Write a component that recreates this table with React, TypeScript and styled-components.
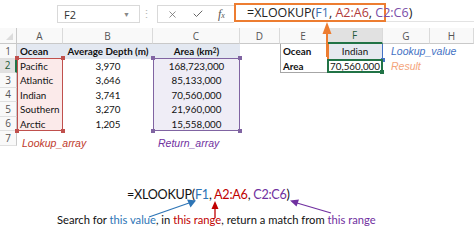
import styled, { createGlobalStyle } from "styled-components";
import { X, Check } from "lucide-react";

const GlobalStyle = createGlobalStyle`
  html, body { margin: 0; padding: 0; background: #fff; }
  body { font-family: Lato, "Liberation Sans", sans-serif; }
`;

const Page = styled.div`
  position: relative;
  width: 474px;
  height: 245px;
  overflow: hidden;
  background: #fff;
`;

/* ---------- formula bar ---------- */

const Toolbar = styled.div`
  display: flex;
  align-items: flex-start;
  height: 28px;
  padding: 3px 0 0 57px;
  box-sizing: border-box;
  font-family: "Open Sans", "Liberation Sans", sans-serif;
`;

const NameBox = styled.div`
  display: flex;
  align-items: center;
  justify-content: space-between;
  width: 83px;
  height: 18px;
  margin-top: 2px;
  padding: 0 9px 0 6px;
  box-sizing: border-box;
  border: 1px solid #d9d9d9;
  font-size: 11px;
  color: #333;

  span.caret {
    font-size: 7px;
    color: #888;
  }
`;

const Grip = styled.div`
  width: 17px;
  height: 18px;
  margin-top: 2px;
  padding-left: 1px;
  box-sizing: border-box;
  color: #b5b5b5;
  font-size: 11px;
  line-height: 18px;
`;

const FxBox = styled.div`
  display: flex;
  align-items: center;
  gap: 14px;
  width: 77px;
  height: 18px;
  margin-top: 2px;
  padding-left: 9px;
  box-sizing: border-box;
  border: 1px solid #d9d9d9;
  border-right: none;
  color: #666;

  i {
    font-family: "Liberation Serif", serif;
    font-size: 12px;
    color: #555;
  }
  i small {
    font-size: 8px;
  }
`;

const FormulaBox = styled.div`
  width: 152px;
  height: 19px;
  padding-left: 11px;
  box-sizing: border-box;
  border: 2px solid #ed7d31;
  font-size: 12.5px;
  line-height: 15px;
  color: #222;
  white-space: nowrap;
`;

const Ref = styled.span<{ $c: string }>`
  color: ${(p) => p.$c};
`;

const BarRest = styled.div`
  flex: 1;
  height: 18px;
  border-bottom: 1px solid #e3e3e3;
`;

/* ---------- sheet ---------- */

const Sheet = styled.div`
  display: grid;
  grid-template-columns: 17px 46px 90px 87px 40px 47px 56px 47px 44px;
  grid-template-rows: 16px repeat(7, 14.5px);
  color: #111;
`;

const ColHead = styled.div<{ $col: number; $active?: boolean }>`
  grid-column: ${(p) => p.$col};
  grid-row: 1;
  display: flex;
  align-items: center;
  justify-content: center;
  background: ${(p) => (p.$active ? "#e1e1e1" : "#f9f9f9")};
  border-right: 1px solid #dadada;
  border-bottom: ${(p) => (p.$active ? "2px solid #217346" : "1px solid #c9c9c9")};
  font-family: "Open Sans", "Liberation Sans", sans-serif;
  font-size: 10px;
  color: ${(p) => (p.$active ? "#215a38" : "#555")};
  box-sizing: border-box;
`;

const Corner = styled.div`
  grid-column: 1;
  grid-row: 1;
  position: relative;
  background: #f9f9f9;
  border-right: 1px solid #c9c9c9;
  border-bottom: 1px solid #c9c9c9;
  box-sizing: border-box;

  &::after {
    content: "";
    position: absolute;
    right: 3px;
    bottom: 3px;
    border-left: 7px solid transparent;
    border-bottom: 7px solid #dcdcdc;
  }
`;

const RowHead = styled.div<{ $row: number; $active?: boolean }>`
  grid-column: 1;
  grid-row: ${(p) => p.$row};
  display: flex;
  align-items: center;
  justify-content: center;
  background: ${(p) => (p.$active ? "#e1e1e1" : "#f9f9f9")};
  border-right: ${(p) => (p.$active ? "2px solid #217346" : "1px solid #c9c9c9")};
  border-bottom: 1px solid #e0e0e0;
  box-sizing: border-box;
  font-family: "Open Sans", "Liberation Sans", sans-serif;
  font-size: 10px;
  color: ${(p) => (p.$active ? "#215a38" : "#555")};
`;

const Band = styled.div<{ $col: string; $row: string; $bg: string }>`
  grid-column: ${(p) => p.$col};
  grid-row: ${(p) => p.$row};
  background: ${(p) => p.$bg};
`;

const Range = styled.div<{ $col: string; $row: string; $color: string; $bg: string }>`
  grid-column: ${(p) => p.$col};
  grid-row: ${(p) => p.$row};
  position: relative;
  background: ${(p) => p.$bg};
  border: 1.5px solid ${(p) => p.$color};
  margin-top: -1px;
  box-sizing: border-box;
`;

const Handle = styled.span<{ $color: string; $v: "top" | "bottom"; $h: "left" | "right" }>`
  position: absolute;
  ${(p) => p.$v}: -3px;
  ${(p) => p.$h}: -3px;
  width: 4px;
  height: 4px;
  background: ${(p) => p.$color};
`;

const Cell = styled.div<{ $col: number; $row: number; $align?: string; $bold?: boolean }>`
  grid-column: ${(p) => p.$col};
  grid-row: ${(p) => p.$row};
  display: flex;
  align-items: center;
  justify-content: ${(p) => p.$align || "flex-start"};
  padding: 0 3px;
  font-weight: ${(p) => (p.$bold ? 700 : 400)};
  font-size: 9.8px;
  white-space: nowrap;
  z-index: 1;

  sup {
    font-size: 6.5px;
    line-height: 0;
  }
`;

const LookupBox = styled.div`
  grid-column: 6 / 8;
  grid-row: 2 / 4;
  border: 1px solid #a6a6a6;
  border-top: none;
  box-sizing: border-box;
`;

const ValueCell = styled.div`
  grid-column: 7;
  grid-row: 2;
  position: relative;
  background: #e6e9f0;
  border-left: 2px solid #ed7d31;
  border-right: 1.5px solid #4472c4;
  box-sizing: border-box;
`;

const ActiveCell = styled.div`
  grid-column: 7;
  grid-row: 3;
  position: relative;
  border: 2px solid #217346;
  box-sizing: border-box;
`;

const Tag = styled.div<{ $col: string; $row: number; $color: string; $drop?: number }>`
  grid-column: ${(p) => p.$col};
  grid-row: ${(p) => p.$row};
  padding: ${(p) => p.$drop || 0}px 0 0 ${(p) => (p.$drop ? 5 : 8)}px;
  font-family: "Liberation Sans", Arial, sans-serif;
  font-style: italic;
  font-size: 10.5px;
  line-height: 14.5px;
  color: ${(p) => p.$color};
  white-space: nowrap;
  z-index: 1;
`;

/* ---------- explanation ---------- */

const Notes = styled.div`
  display: flex;
  flex-direction: column;
  padding-top: 40px;
  font-family: Lato, "Liberation Sans", sans-serif;
  color: #111;
`;

const BigFormula = styled.div`
  padding-left: 127px;
  font-size: 12.6px;
  letter-spacing: -0.25px;
  line-height: 18px;
  white-space: nowrap;
`;

const Sentence = styled.div`
  padding-left: 57px;
  margin-top: 8px;
  font-size: 11.2px;
  line-height: 16px;
  white-space: nowrap;
`;

const Arrows = styled.svg`
  position: absolute;
  left: 0;
  top: 0;
  pointer-events: none;
  z-index: 5;
`;

const BLUE = "#2e75b6";
const RED = "#c00000";
const PURPLE = "#7030a0";
const ORANGE = "#ed7d31";

const oceans = [
  ["Pacific", "3,970", "168,723,000"],
  ["Atlantic", "3,646", "85,133,000"],
  ["Indian", "3,741", "70,560,000"],
  ["Southern", "3,270", "21,960,000"],
  ["Arctic", "1,205", "15,558,000"],
];

const columns = ["A", "B", "C", "D", "E", "F", "G", "H"];

function Corners({ color }: { color: string }) {
  return (
    <>
      <Handle $color={color} $v="top" $h="left" />
      <Handle $color={color} $v="top" $h="right" />
      <Handle $color={color} $v="bottom" $h="left" />
      <Handle $color={color} $v="bottom" $h="right" />
    </>
  );
}

export default function App() {
  return (
    <Page>
      <GlobalStyle />
      <Toolbar>
        <NameBox>
          <span>F2</span>
          <span className="caret">▼</span>
        </NameBox>
        <Grip>⋮</Grip>
        <FxBox>
          <X size={11} strokeWidth={1.6} />
          <Check size={12} strokeWidth={2} />
          <i>
            f<small>x</small>
          </i>
        </FxBox>
        <FormulaBox>
          =XLOOKUP(<Ref $c="#3a6fb0">F1</Ref>, <Ref $c="#b03a3a">A2:A6</Ref>,{" "}
          <Ref $c="#7a4fa8">C2:C6</Ref>)
        </FormulaBox>
        <BarRest />
      </Toolbar>

      <Sheet>
        <Corner />
        {columns.map((c, i) => (
          <ColHead key={c} $col={i + 2} $active={c === "F"}>
            {c}
          </ColHead>
        ))}
        {[1, 2, 3, 4, 5, 6, 7].map((n) => (
          <RowHead key={n} $row={n + 1} $active={n === 2}>
            {n}
          </RowHead>
        ))}

        <Band $col="2 / 5" $row="2" $bg="#e3e8f1" />
        <Range $col="2" $row="3 / 8" $color="#c0504d" $bg="#fbeaea">
          <Corners color="#c0504d" />
        </Range>
        <Range $col="4" $row="3 / 8" $color="#8064a2" $bg="#efedf6">
          <Corners color="#8064a2" />
        </Range>

        <Cell $col={2} $row={2} $bold>
          Ocean
        </Cell>
        <Cell $col={3} $row={2} $bold $align="center">
          Average Depth (m)
        </Cell>
        <Cell $col={4} $row={2} $bold $align="center">
          Area (km<sup>2</sup>)
        </Cell>
        {oceans.flatMap(([name, depth, area], i) => [
          <Cell key={name} $col={2} $row={i + 3}>
            {name}
          </Cell>,
          <Cell key={name + "d"} $col={3} $row={i + 3} $align="center">
            {depth}
          </Cell>,
          <Cell key={name + "a"} $col={4} $row={i + 3} $align="center">
            {area}
          </Cell>,
        ])}

        <LookupBox />
        <ValueCell>
          <Handle $color="#4472c4" $v="bottom" $h="right" />
        </ValueCell>
        <ActiveCell>
          <Handle $color="#217346" $v="bottom" $h="right" />
        </ActiveCell>
        <Cell $col={6} $row={2} $bold>
          Ocean
        </Cell>
        <Cell $col={6} $row={3} $bold>
          Area
        </Cell>
        <Cell $col={7} $row={2} $align="center">
          Indian
        </Cell>
        <Cell $col={7} $row={3} $align="flex-end">
          70,560,000
        </Cell>
        <Tag $col="8 / 10" $row={2} $color="#4472c4">
          Lookup_value
        </Tag>
        <Tag $col="8 / 10" $row={3} $color="#f4a47a">
          Result
        </Tag>
        <Tag $col="2 / 4" $row={8} $color="#c0392b" $drop={5}>
          Lookup_array
        </Tag>
        <Tag $col="4 / 6" $row={8} $color="#7030a0" $drop={5}>
          Return_array
        </Tag>
      </Sheet>

      <Notes>
        <BigFormula>
          =XLOOKUP(<Ref $c={BLUE}>F1</Ref>, <Ref $c={RED}>A2:A6</Ref>,{" "}
          <Ref $c={PURPLE}>C2:C6</Ref>)
        </BigFormula>
        <Sentence>
          Search for <Ref $c={BLUE}>this value</Ref>, in{" "}
          <Ref $c={RED}>this range</Ref>, return a match from{" "}
          <Ref $c={PURPLE}>this range</Ref>
        </Sentence>
      </Notes>

      <Arrows width="474" height="245" viewBox="0 0 474 245">
        <line x1="327" y1="57" x2="327" y2="32" stroke={ORANGE} strokeWidth="2" />
        <polygon points="327,22 322.5,34 331.5,34" fill={ORANGE} />

        <line x1="149" y1="217" x2="189" y2="203" stroke={BLUE} strokeWidth="1.3" />
        <polygon points="196,200.5 187,199.5 190.5,207.5" fill={BLUE} />

        <line x1="215" y1="218" x2="215" y2="207" stroke={RED} strokeWidth="1.3" />
        <polygon points="215,201 211.5,209 218.5,209" fill={RED} />

        <line x1="331" y1="213" x2="297" y2="203" stroke={PURPLE} strokeWidth="1.3" />
        <polygon points="290,200.5 299,199.5 296.5,206.5" fill={PURPLE} />
      </Arrows>
    </Page>
  );
}
